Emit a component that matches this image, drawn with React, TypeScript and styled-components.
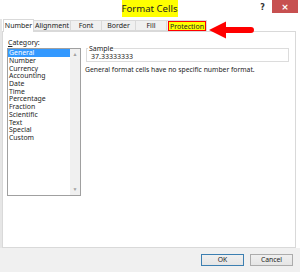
import React from "react";
import styled, { createGlobalStyle } from "styled-components";

const Global = createGlobalStyle`
  html, body { margin: 0; padding: 0; background: #f0f0f0; }
  body { width: 300px; height: 272px; overflow: hidden; font-family: "Noto Sans", "Open Sans", sans-serif; }
`;

const Window = styled.div`
  width: 300px;
  height: 272px;
  display: flex;
  flex-direction: column;
  background: #f0f0f0;
  position: relative;
  color: #1e1e1e;
`;

const TitleBar = styled.div`
  height: 23px;
  background: #ffffff;
  display: flex;
  justify-content: center;
  align-items: flex-start;
  position: relative;
`;

const Title = styled.div`
  margin-left: -1px;
  width: 56px;
  height: 17px;
  background: #ffff00;
  font-size: 9.6px;
  line-height: 17px;
  text-align: center;
  white-space: nowrap;
  color: #222;
`;

const Controls = styled.div`
  position: absolute;
  top: 0;
  right: 2px;
  display: flex;
  align-items: flex-start;
  gap: 7px;
`;

const Help = styled.span`
  font-size: 8px;
  font-weight: bold;
  line-height: 10px;
  margin-top: 3px;
  color: #333;
  font-family: "DejaVu Sans", sans-serif;
`;

const Close = styled.div`
  width: 26px;
  height: 13px;
  background: #c75050;
  color: #fff;
  display: flex;
  align-items: center;
  justify-content: center;
  font-size: 9px;
  font-weight: bold;
  font-family: "DejaVu Sans", sans-serif;
`;

const Body = styled.div`
  flex: 1;
  display: flex;
  flex-direction: column;
  background: #ffffff;
  padding-left: 2px;
  box-shadow: inset 2px 0 0 #e6e6e6;
`;

const TabStrip = styled.div`
  height: 12px;
  display: flex;
  align-items: flex-end;
  padding-left: 2px;
  position: relative;
  z-index: 1;
  background: #ffffff;
`;

const Tab = styled.div<{ $active?: boolean; $w: number }>`
  box-sizing: border-box;
  width: ${(p) => p.$w}px;
  height: ${(p) => (p.$active ? 13 : 11)}px;
  margin-bottom: ${(p) => (p.$active ? -1 : 0)}px;
  border: 1px solid #d9d9d9;
  border-bottom: ${(p) => (p.$active ? "none" : "1px solid #d9d9d9")};
  margin-left: -1px;
  background: ${(p) => (p.$active ? "#ffffff" : "#f0f0f0")};
  font-size: 7px;
  line-height: ${(p) => (p.$active ? 11 : 9)}px;
  text-align: center;
  color: #222;
  position: relative;
`;

const Mark = styled.span`
  position: absolute;
  left: 1px;
  right: 0px;
  top: 0px;
  bottom: -1px;
  background: #ffff00;
  border: 1.5px solid #ff0000;
  display: flex;
  align-items: center;
  justify-content: center;
`;

const Panel = styled.div`
  box-sizing: border-box;
  width: 294px;
  height: 217px;
  border: 1px solid #d9d9d9;
  background: #ffffff;
  display: flex;
  padding: 6px 0 0 4px;
  gap: 4px;
`;

const LeftCol = styled.div`
  display: flex;
  flex-direction: column;
  width: 74px;
`;

const Label = styled.div`
  font-size: 7px;
  line-height: 9px;
  height: 10px;
  margin-left: 1px;
  color: #222;
  u { text-decoration: underline; }
`;

const ListBox = styled.div`
  box-sizing: border-box;
  width: 74px;
  height: 148px;
  border: 1px solid #a0a0a0;
  display: flex;
  background: #fff;
`;

const Items = styled.div`
  flex: 1;
  display: flex;
  flex-direction: column;
`;

const Item = styled.div<{ $sel?: boolean }>`
  height: 7.7px;
  line-height: 7.7px;
  font-size: 6.9px;
  padding-left: 1px;
  background: ${(p) => (p.$sel ? "#3399ff" : "transparent")};
  color: ${(p) => (p.$sel ? "#ffffff" : "#1e1e1e")};
  white-space: nowrap;
`;

const Scroll = styled.div`
  width: 10px;
  background: #f0f0f0;
  display: flex;
  flex-direction: column;
  justify-content: space-between;
  align-items: center;
  color: #a0a0a0;
  font-size: 5px;
  padding: 2px 0 3px;
  box-sizing: border-box;
`;

const RightCol = styled.div`
  flex: 1;
  display: flex;
  flex-direction: column;
  padding-right: 6px;
`;

const SampleBox = styled.fieldset`
  margin: 7px 0 0 1px;
  padding: 0 0 0 4px;
  border: 1px solid #dcdcdc;
  height: 17px;
  box-sizing: border-box;
  min-width: 0;
  legend {
    font-size: 7px;
    line-height: 7px;
    padding: 0 1px;
    margin-left: -3px;
    color: #222;
  }
`;

const SampleValue = styled.div`
  font-size: 7px;
  line-height: 8px;
  margin-top: 1px;
  color: #222;
`;

const Desc = styled.div`
  font-size: 6.8px;
  line-height: 8px;
  margin-top: 4px;
  color: #222;
  white-space: nowrap;
`;

const Footer = styled.div`
  height: 21px;
  background: #f0f0f0;
  display: flex;
  justify-content: flex-end;
  align-items: flex-start;
  padding: 6px 7px 0 0;
  gap: 6px;
`;

const Button = styled.div<{ $def?: boolean }>`
  box-sizing: border-box;
  width: 43px;
  height: 12px;
  border: 1px solid ${(p) => (p.$def ? "#3c7fb1" : "#acacac")};
  background: linear-gradient(#f0f0f0, #e5e5e5);
  font-size: 6.8px;
  line-height: 10px;
  text-align: center;
  color: #222;
`;

const Arrow = styled.svg`
  position: absolute;
  left: 207px;
  top: 20px;
  z-index: 5;
`;

const categories = [
  "General",
  "Number",
  "Currency",
  "Accounting",
  "Date",
  "Time",
  "Percentage",
  "Fraction",
  "Scientific",
  "Text",
  "Special",
  "Custom",
];

export default function App() {
  return (
    <>
      <Global />
      <Window>
        <TitleBar>
          <Title>Format Cells</Title>
          <Controls>
            <Help>?</Help>
            <Close>×</Close>
          </Controls>
        </TitleBar>
        <Body>
          <TabStrip>
            <Tab $active $w={31}>Number</Tab>
            <Tab $w={38}>Alignment</Tab>
            <Tab $w={32}>Font</Tab>
            <Tab $w={35}>Border</Tab>
            <Tab $w={32}>Fill</Tab>
            <Tab $w={41}>
              <Mark>Protection</Mark>
            </Tab>
          </TabStrip>
          <Panel>
            <LeftCol>
              <Label>
                <u>C</u>ategory:
              </Label>
              <ListBox>
                <Items>
                  {categories.map((c, i) => (
                    <Item key={c} $sel={i === 0}>
                      {c}
                    </Item>
                  ))}
                </Items>
                <Scroll>
                  <span>▲</span>
                  <span>▼</span>
                </Scroll>
              </ListBox>
            </LeftCol>
            <RightCol>
              <SampleBox>
                <legend>Sample</legend>
                <SampleValue>37.33333333</SampleValue>
              </SampleBox>
              <Desc>General format cells have no specific number format.</Desc>
            </RightCol>
          </Panel>
        </Body>
        <Footer>
          <Button $def>OK</Button>
          <Button>Cancel</Button>
        </Footer>
        <Arrow width="50" height="20" viewBox="0 0 50 20">
          <path d="M2 10 L19 1.5 L19 7 L44 7 Q47 7 47 10 Q47 13 44 13 L19 13 L19 18.5 Z" fill="#ff0000" />
        </Arrow>
      </Window>
    </>
  );
}
